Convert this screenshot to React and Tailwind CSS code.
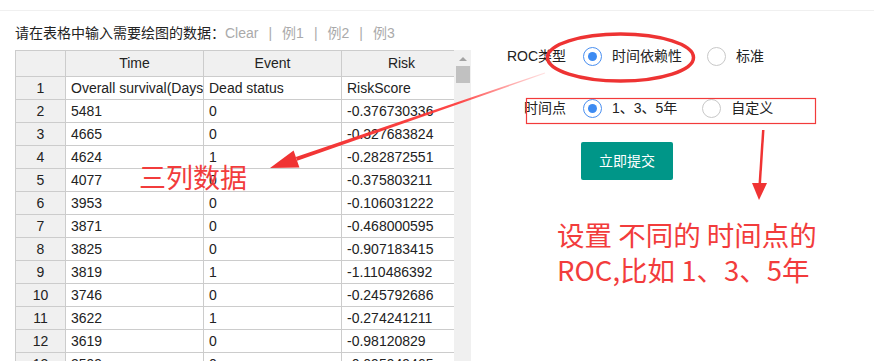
import React from "react";

const rows = [
  ["1", "Overall survival(Days", "Dead status", "RiskScore"],
  ["2", "5481", "0", "-0.376730336"],
  ["3", "4665", "0", "-0.327683824"],
  ["4", "4624", "1", "-0.282872551"],
  ["5", "4077", "0", "-0.375803211"],
  ["6", "3953", "0", "-0.106031222"],
  ["7", "3871", "0", "-0.468000595"],
  ["8", "3825", "0", "-0.907183415"],
  ["9", "3819", "1", "-1.110486392"],
  ["10", "3746", "0", "-0.245792686"],
  ["11", "3622", "1", "-0.274241211"],
  ["12", "3619", "0", "-0.98120829"],
  ["13", "3599", "0", "-0.095949465"],
];

function Radio({ checked, label }) {
  return (
    <div className="flex items-center mr-[25px]">
      {checked ? (
        <span className="w-[19px] h-[19px] rounded-full border-[1.5px] border-[#4a8ff0] flex items-center justify-center">
          <span className="w-[9px] h-[9px] rounded-full bg-[#3d8bf2]"></span>
        </span>
      ) : (
        <span className="w-[19px] h-[19px] rounded-full border-[1.5px] border-[#c8c8c8]"></span>
      )}
      <span className="ml-[10px] text-[14px] text-[#222]">{label}</span>
    </div>
  );
}

export default function App() {
  return (
    <div
      className="relative w-[874px] h-[361px] overflow-hidden bg-white pt-[10px]"
      style={{ fontFamily: '"Liberation Sans", Arial, "Noto Sans CJK SC", sans-serif' }}
    >
      <div className="flex border-t border-[#f0f0f0] h-[351px]">
        {/* left: data table */}
        <div className="w-[471px] pl-[15px] flex flex-col">
          <div className="mt-[12px] mb-[7px] h-[20px] flex items-center text-[14px] text-[#222]">
            <span>请在表格中输入需要绘图的数据：</span>
            <span className="text-[#aaa]">Clear</span>
            <span className="text-[#aaa] mx-[10px]">|</span>
            <span className="text-[#aaa]">例1</span>
            <span className="text-[#aaa] mx-[10px]">|</span>
            <span className="text-[#aaa]">例2</span>
            <span className="text-[#aaa] mx-[10px]">|</span>
            <span className="text-[#aaa]">例3</span>
          </div>

          <div className="flex flex-1 overflow-hidden">
            <div className="w-[439px] overflow-hidden border-l border-t border-[#ccc] text-[14px] text-[#222]">
              <div className="flex h-[26px] border-b border-[#ccc] bg-[#f0f0f0] w-[500px]">
                <div className="w-[50px] border-r border-[#ccc]"></div>
                <div className="w-[138px] border-r border-[#ccc] flex items-center justify-center">Time</div>
                <div className="w-[138px] border-r border-[#ccc] flex items-center justify-center">Event</div>
                <div className="w-[120px] border-r border-[#ccc] flex items-center justify-center">Risk</div>
              </div>
              {rows.map((r) => (
                <div key={r[0]} className="flex h-[23px] border-b border-[#ccc] w-[500px]">
                  <div className="w-[50px] border-r border-[#ccc] bg-[#f0f0f0] flex items-center justify-center">
                    {r[0]}
                  </div>
                  <div className="w-[138px] border-r border-[#ccc] flex items-center pl-[5px] overflow-hidden whitespace-nowrap">
                    {r[1]}
                  </div>
                  <div className="w-[138px] border-r border-[#ccc] flex items-center pl-[5px] whitespace-nowrap">
                    {r[2]}
                  </div>
                  <div className="w-[120px] border-r border-[#ccc] flex items-center pl-[5px] whitespace-nowrap">
                    {r[3]}
                  </div>
                </div>
              ))}
            </div>
            <div className="w-[17px] bg-[#f0f0f0] flex flex-col items-center">
              <div className="mt-[7px] w-0 h-0 border-l-[4px] border-r-[4px] border-b-[4px] border-l-transparent border-r-transparent border-b-[#a3a3a3]"></div>
              <div className="mt-[5px] w-[14px] h-[17px] bg-[#c1c1c1]"></div>
            </div>
          </div>
        </div>

        {/* right: options */}
        <div className="flex-1 flex flex-col">
          <div className="mt-[35px] h-[20px] flex items-center">
            <div className="w-[95px] text-right text-[14px] text-[#222]">ROC类型</div>
            <div className="ml-[17px] flex items-center">
              <Radio checked label="时间依赖性" />
              <Radio label="标准" />
            </div>
          </div>
          <div className="mt-[32px] h-[20px] flex items-center">
            <div className="w-[95px] text-right text-[14px] text-[#222]">时间点</div>
            <div className="ml-[17px] flex items-center">
              <Radio checked label="1、3、5年" />
              <Radio label="自定义" />
            </div>
          </div>
          <div className="mt-[24px] ml-[110px]">
            <button className="w-[92px] h-[38px] rounded-[2px] bg-[#009688] text-white text-[14px]">
              立即提交
            </button>
          </div>
        </div>
      </div>

      {/* annotations */}
      <svg className="absolute left-0 top-0 pointer-events-none" width="874" height="361">
        <defs>
          <linearGradient id="fade" x1="545" y1="73" x2="297" y2="159" gradientUnits="userSpaceOnUse">
            <stop offset="0" stopColor="#f44" stopOpacity="0.15" />
            <stop offset="0.35" stopColor="#f33" stopOpacity="0.9" />
            <stop offset="1" stopColor="#f03333" />
          </linearGradient>
        </defs>
        <ellipse cx="620.5" cy="57.5" rx="73" ry="23.5" fill="none" stroke="#ee3333" strokeWidth="3.5" />
        <polygon points="545.2,73.5 544.8,72.5 295.8,157 297.2,160.8" fill="url(#fade)" />
        <polygon points="270,168 299.4,167.4 293.6,150.4" fill="#f03333" />
        <rect x="526.5" y="98.5" width="289" height="25" fill="none" stroke="#f23b3b" strokeWidth="1.2" />
        <polygon points="762,130 764.5,130 761,184 758.5,184" fill="#f03333" />
        <polygon points="752,183 767,183 759,200" fill="#f03333" />
      </svg>

      <div
        className="absolute left-[139px] top-[163px] text-[27px] leading-[28px] text-[#f23c3c] whitespace-nowrap"
        style={{ fontFamily: '"Noto Sans CJK SC", sans-serif' }}
      >
        三列数据
      </div>
      <div
        className="absolute left-[557px] top-[217px] text-[27.5px] leading-[35px] text-[#f23c3c] whitespace-nowrap"
        style={{ fontFamily: '"Noto Sans CJK SC", sans-serif' }}
      >
        <div>设置 不同的 时间点的</div>
        <div>ROC,比如 1、3、5年</div>
      </div>
    </div>
  );
}
